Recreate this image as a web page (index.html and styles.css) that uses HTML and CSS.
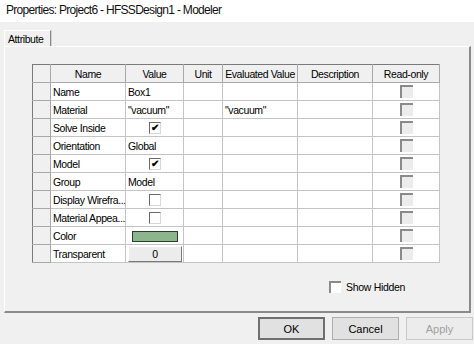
FILE: index.html
```html
<!DOCTYPE html>
<html lang="en">
<head>
  <meta charset="UTF-8">
  <title>Properties</title>
  <link rel="stylesheet" href="styles.css">
</head>
<body>
  <div class="window">
    <div class="titlebar">Properties: Project6 - HFSSDesign1 - Modeler</div>

    <div class="tabs">
      <div class="tab">Attribute</div>
    </div>

    <div class="panel">
      <table class="grid">
        <colgroup>
          <col class="c-head">
          <col class="c-name">
          <col class="c-value">
          <col class="c-unit">
          <col class="c-eval">
          <col class="c-desc">
          <col class="c-ro">
        </colgroup>
        <thead>
          <tr>
            <th class="rowhead"></th>
            <th>Name</th>
            <th>Value</th>
            <th>Unit</th>
            <th>Evaluated Value</th>
            <th>Description</th>
            <th>Read-only</th>
          </tr>
        </thead>
        <tbody>
          <tr>
            <td class="rowhead"></td>
            <td>Name</td>
            <td>Box1</td>
            <td></td><td></td><td></td>
            <td class="center"><span class="ro-box"></span></td>
          </tr>
          <tr>
            <td class="rowhead"></td>
            <td>Material</td>
            <td>"vacuum"</td>
            <td></td>
            <td>"vacuum"</td>
            <td></td>
            <td class="center"><span class="ro-box"></span></td>
          </tr>
          <tr>
            <td class="rowhead"></td>
            <td>Solve Inside</td>
            <td class="center"><span class="check on">&#10004;</span></td>
            <td></td><td></td><td></td>
            <td class="center"><span class="ro-box"></span></td>
          </tr>
          <tr>
            <td class="rowhead"></td>
            <td>Orientation</td>
            <td>Global</td>
            <td></td><td></td><td></td>
            <td class="center"><span class="ro-box"></span></td>
          </tr>
          <tr>
            <td class="rowhead"></td>
            <td>Model</td>
            <td class="center"><span class="check on">&#10004;</span></td>
            <td></td><td></td><td></td>
            <td class="center"><span class="ro-box"></span></td>
          </tr>
          <tr>
            <td class="rowhead"></td>
            <td>Group</td>
            <td>Model</td>
            <td></td><td></td><td></td>
            <td class="center"><span class="ro-box"></span></td>
          </tr>
          <tr>
            <td class="rowhead"></td>
            <td>Display Wirefra...</td>
            <td class="center"><span class="check"></span></td>
            <td></td><td></td><td></td>
            <td class="center"><span class="ro-box"></span></td>
          </tr>
          <tr>
            <td class="rowhead"></td>
            <td>Material Appea...</td>
            <td class="center"><span class="check"></span></td>
            <td></td><td></td><td></td>
            <td class="center"><span class="ro-box"></span></td>
          </tr>
          <tr>
            <td class="rowhead"></td>
            <td>Color</td>
            <td class="center"><span class="swatch"></span></td>
            <td></td><td></td><td></td>
            <td class="center"><span class="ro-box"></span></td>
          </tr>
          <tr>
            <td class="rowhead"></td>
            <td>Transparent</td>
            <td class="center"><span class="cell-btn">0</span></td>
            <td></td><td></td><td></td>
            <td class="center"><span class="ro-box"></span></td>
          </tr>
        </tbody>
      </table>

      <label class="show-hidden">
        <span class="sh-box"></span>
        Show Hidden
      </label>
    </div>

    <div class="buttons">
      <button class="btn btn-default">OK</button>
      <button class="btn">Cancel</button>
      <button class="btn" disabled>Apply</button>
    </div>
  </div>
</body>
</html>
```

FILE: styles.css
```css
body {
  margin: 0;
  background: #f0f0f0;
  font-family: "Liberation Sans", Arial, sans-serif;
  color: #000;
}

.window {
  width: 474px;
  height: 344px;
  overflow: hidden;
  display: flex;
  flex-direction: column;
}

.titlebar {
  height: 22px;
  line-height: 21px;
  background: #fff;
  padding-left: 6px;
  font-size: 12px;
  letter-spacing: -0.7px;
  color: #111;
}

.tabs {
  display: flex;
  padding: 8px 0 0 4px;
  height: 16px;
}

.tab {
  width: 47px;
  height: 16px;
  line-height: 16px;
  padding-left: 3px;
  font-size: 10.5px;
  letter-spacing: -0.4px;
  border-top: 1px solid #fff;
  border-left: 1px solid #fff;
  border-right: 1px solid #8a8a8a;
  box-sizing: border-box;
  box-shadow: 1px 0 0 #d0d0d0;
}

.panel {
  margin: 0 3px 0 4px;
  height: 267px;
  box-sizing: border-box;
  border-top: 1px solid #fff;
  border-left: 1px solid #fff;
  border-right: 2px solid #8a8a8a;
  border-bottom: 2px solid #8a8a8a;
  padding: 17px 0 0 27px;
  display: flex;
  flex-direction: column;
}

/* property grid */
.grid {
  border-collapse: collapse;
  table-layout: fixed;
  width: 407px;
  background: #fff;
  font-size: 10.5px;
  letter-spacing: -0.4px;
  border-top: 1px solid #7a7a7a;
  border-left: 1px solid #7a7a7a;
  border-bottom: 1px solid #a0a0a0;
}

.c-head { width: 18px; }
.c-name { width: 75px; }
.c-value { width: 58px; }
.c-unit { width: 39px; }
.c-eval { width: 75px; }
.c-desc { width: 75px; }
.c-ro { width: 67px; }

.grid tr {
  height: 18px;
}

.grid th,
.grid td {
  padding: 0 2px;
  border: 1px solid #c4c4c4;
  white-space: nowrap;
  overflow: hidden;
  vertical-align: middle;
}

.grid tr:first-child th {
  border-top: none;
}

.grid th {
  background: #f0f0f0;
  font-weight: normal;
  text-align: center;
  border-color: #a8a8a8;
}

.grid td.rowhead,
.grid th.rowhead {
  background: #f0f0f0;
  border-left: none;
  border-color: #a8a8a8;
}

.grid .center {
  text-align: center;
  padding: 0;
}

.check {
  display: inline-block;
  width: 12px;
  height: 12px;
  box-sizing: border-box;
  border-top: 1px solid #6a6a6a;
  border-left: 1px solid #6a6a6a;
  border-right: 1px solid #d8d8d8;
  border-bottom: 1px solid #d8d8d8;
  background: #fff;
  vertical-align: middle;
  font-size: 10px;
  font-weight: bold;
  line-height: 10px;
  letter-spacing: 0;
  text-align: center;
}

.ro-box {
  display: inline-block;
  width: 13px;
  height: 13px;
  box-sizing: border-box;
  border-top: 2px solid #8a8a8a;
  border-left: 2px solid #8a8a8a;
  background: #ececec;
  vertical-align: middle;
}

.swatch {
  display: inline-block;
  width: 46px;
  height: 11px;
  box-sizing: border-box;
  border: 1px solid #2e3a2e;
  background: #8db58d;
  vertical-align: middle;
}

.cell-btn {
  display: block;
  margin: 0 1px 0 2px;
  height: 16px;
  line-height: 15px;
  box-sizing: border-box;
  background: #ececec;
  border-top: 1px solid #fff;
  border-left: 1px solid #fff;
  border-right: 1px solid #7a7a7a;
  border-bottom: 1px solid #7a7a7a;
}

.show-hidden {
  display: flex;
  align-items: center;
  gap: 5px;
  margin: 18px 0 0 297px;
  font-size: 10.5px;
  letter-spacing: -0.3px;
}

.sh-box {
  width: 12px;
  height: 12px;
  box-sizing: border-box;
  border-top: 2px solid #8a8a8a;
  border-left: 2px solid #8a8a8a;
  background: #fff;
}

/* dialog buttons */
.buttons {
  display: flex;
  gap: 7px;
  padding: 4px 0 0 258px;
}

.btn {
  width: 67px;
  height: 23px;
  font-family: "Liberation Sans", Arial, sans-serif;
  font-size: 11px;
  background: #e1e1e1;
  border: 1px solid #adadad;
  padding: 0;
  color: #000;
}

.btn-default {
  border: 2px solid #6f6f6f;
}

.btn:disabled {
  color: #a0a0a0;
  background: #ececec;
  border-color: #c8c8c8;
}
```
